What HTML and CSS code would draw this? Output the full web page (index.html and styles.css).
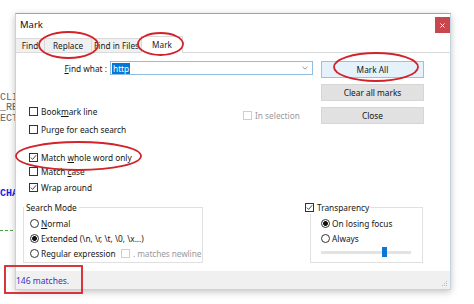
FILE: index.html
```html
<!DOCTYPE html>
<html>
<head>
<meta charset="utf-8">
<title>Mark</title>
<link rel="stylesheet" href="styles.css">
</head>
<body>
<div class="editor">
  <div class="code">CLI</div>
  <div class="code">_RE</div>
  <div class="code">ECT</div>
  <div class="code kw">CHA</div>
  <div class="dash"></div>
</div>

<div class="dialog">
  <div class="titlebar">
    <span class="title">Mark</span>
    <span class="closebtn"><svg width="5" height="5" viewBox="0 0 5 5"><path d="M0.5 0.5L4.5 4.5M4.5 0.5L0.5 4.5" stroke="#fff" stroke-width="1"/></svg></span>
  </div>
  <div class="tabs">
    <span class="tab t-find">Find</span>
    <span class="tab t-replace">Replace</span>
    <span class="tab t-fif">Find in Files</span>
    <span class="tab t-mark active">Mark</span>
  </div>
  <div class="body">
    <div class="top">
      <div class="main">
        <div class="findrow">
          <span class="flabel"><u>F</u>ind what :</span>
          <span class="combo"><span class="sel">http</span><svg class="chev" width="6" height="4" viewBox="0 0 6 4"><path d="M0.5 0.8L3 3.2L5.5 0.8" fill="none" stroke="#8a8a8a" stroke-width="0.9"/></svg></span>
        </div>
        <div class="opts">
          <div class="checks">
            <div class="row r1"><span class="cb"></span><span>Book<u>m</u>ark line</span></div>
            <div class="row r2"><span class="cb"></span><span>Purge for each search</span></div>
            <div class="row r3"><span class="cb"><svg width="7" height="7" viewBox="0 0 7 7"><path d="M0.8 3.6L2.6 5.4L6.2 1.2" fill="none" stroke="#333" stroke-width="0.9"/></svg></span><span>Match <u>w</u>hole word only</span></div>
            <div class="row r4"><span class="cb"></span><span>Match <u>c</u>ase</span></div>
            <div class="row r5"><span class="cb"><svg width="7" height="7" viewBox="0 0 7 7"><path d="M0.8 3.6L2.6 5.4L6.2 1.2" fill="none" stroke="#333" stroke-width="0.9"/></svg></span><span>Wrap around</span></div>
          </div>
          <div class="row insel"><span class="cb dis"></span><span class="distext">In selection</span></div>
        </div>
      </div>
      <div class="buttons">
        <div class="btn primary">Mark All</div>
        <div class="btn">Clear all marks</div>
        <div class="btn">Close</div>
      </div>
    </div>
    <div class="groups">
      <fieldset class="grp search">
        <legend>Search Mode</legend>
        <div class="row g1"><span class="rb"></span><span><u>N</u>ormal</span></div>
        <div class="row g2"><span class="rb on"></span><span>Extended (\n, \r, \t, \0, \x...)</span></div>
        <div class="row g2"><span class="rb"></span><span class="regex">Regular expression</span><span class="cb dis"></span><span class="distext newline">. matches newline</span></div>
      </fieldset>
      <fieldset class="grp transp">
        <legend class="row tlegend"><span class="cb"><svg width="7" height="7" viewBox="0 0 7 7"><path d="M0.8 3.6L2.6 5.4L6.2 1.2" fill="none" stroke="#333" stroke-width="0.9"/></svg></span><span>Transparency</span></legend>
        <div class="row t1"><span class="rb on"></span><span>On losing focus</span></div>
        <div class="row t2"><span class="rb"></span><span>Always</span></div>
        <div class="slider"><span class="thumb"></span></div>
      </fieldset>
    </div>
  </div>
  <div class="status">
    <span>146 matches.</span>
    <svg class="grip" width="6" height="6" viewBox="0 0 6 6"><rect x="4" y="0" width="1" height="1" fill="#b8b8b8"/><rect x="2" y="2" width="1" height="1" fill="#b8b8b8"/><rect x="4" y="2" width="1" height="1" fill="#b8b8b8"/><rect x="0" y="4" width="1" height="1" fill="#b8b8b8"/><rect x="2" y="4" width="1" height="1" fill="#b8b8b8"/><rect x="4" y="4" width="1" height="1" fill="#b8b8b8"/></svg>
  </div>
</div>

<svg class="annot" width="474" height="304" viewBox="0 0 474 304">
  <g fill="none" stroke="#d2232a" stroke-width="1.8">
    <ellipse cx="68.5" cy="45" rx="29.5" ry="13"/>
    <ellipse cx="160.5" cy="44" rx="22.5" ry="11"/>
    <ellipse cx="376" cy="67" rx="42" ry="14"/>
    <ellipse cx="78.5" cy="156" rx="62.5" ry="14"/>
    <rect x="5" y="266" width="77" height="27"/>
  </g>
</svg>
</body>
</html>
```

FILE: styles.css
```css
html, body {
  margin: 0;
  padding: 0;
}
body {
  width: 474px;
  height: 304px;
  position: relative;
  overflow: hidden;
  background: #fff;
  font-family: "Noto Sans", "Open Sans", sans-serif;
  font-size: 8.3px;
  color: #161616;
}
u { text-decoration: underline; text-underline-offset: 1px; }

/* background editor */
.editor {
  padding-top: 92.75px;
  font-family: "Liberation Mono", monospace;
  font-size: 10px;
  line-height: 10.5px;
  color: #666;
}
.kw {
  color: #1c1ce8;
  font-weight: bold;
  margin-top: 64.5px;
}
.dash {
  margin-top: 30.75px;
  width: 15px;
  height: 1px;
  background: repeating-linear-gradient(90deg, #4aa04a 0 3px, transparent 3px 5px);
}

/* dialog window */
.dialog {
  position: absolute;
  left: 15px;
  top: 13px;
  width: 436px;
  height: 277px;
  box-sizing: border-box;
  border: 1px solid #c4d3e2;
  border-top-color: #78abdd;
  background: #fff;
  box-shadow: 0 2px 7px rgba(0, 0, 0, 0.24);
  display: flex;
  flex-direction: column;
}
.titlebar {
  height: 24px;
  flex: none;
  display: flex;
  align-items: flex-start;
}
.title {
  padding-left: 4px;
  font-size: 9.5px;
  line-height: 22px;
  color: #111;
}
.closebtn {
  margin-left: auto;
  margin-top: 3px;
  width: 15px;
  height: 16px;
  background: #c8464d;
  display: flex;
  align-items: center;
  justify-content: center;
}

.tabs {
  height: 15px;
  flex: none;
  box-sizing: border-box;
  border-bottom: 1px solid #dadada;
  display: flex;
  align-items: flex-end;
}
.tab {
  height: 14px;
  box-sizing: border-box;
  border: 1px solid #dadada;
  border-bottom: none;
  margin-right: -1px;
  background: #f0f0f0;
  display: flex;
  align-items: center;
  justify-content: center;
  white-space: nowrap;
  color: #1a1a1a;
  font-size: 8.2px;
}
.t-find { width: 29px; border-left: none; }
.t-replace { width: 48px; }
.t-fif { width: 51px; }
.t-mark { width: 42px; }
.tab.active {
  background: #fff;
  height: 17px;
  margin-bottom: -1px;
  padding-bottom: 2px;
}

.body {
  flex: 1;
  display: flex;
  flex-direction: column;
  box-sizing: border-box;
  padding: 8px 26px 0 0;
}
.top {
  display: flex;
}
.main {
  width: 305px;
  flex: none;
}
.findrow {
  height: 14px;
  display: flex;
  align-items: center;
}
.flabel {
  width: 91px;
  text-align: right;
  white-space: nowrap;
}
.combo {
  margin-left: 3px;
  width: 203px;
  height: 14px;
  box-sizing: border-box;
  border: 1px solid #92bde3;
  display: flex;
  align-items: center;
  padding-left: 1px;
}
.sel {
  background: #0078d7;
  color: #fff;
  line-height: 11px;
  padding: 0 1px;
}
.chev {
  margin-left: auto;
  margin-right: 4px;
}

.opts {
  display: grid;
  grid-template-columns: 214px 1fr;
  padding-left: 13px;
}
.checks {
  display: flex;
  flex-direction: column;
}
.row {
  display: flex;
  align-items: center;
  height: 12px;
  white-space: nowrap;
}
.r1 { margin-top: 30px; }
.r2 { margin-top: 6.5px; }
.r3 { margin-top: 15.5px; }
.r4 { margin-top: 2px; }
.r5 { margin-top: 4px; }
.insel { margin-top: 34.5px; }

.cb {
  width: 9px;
  height: 9px;
  box-sizing: border-box;
  border: 1px solid #333;
  background: #fff;
  margin-right: 3px;
  flex: none;
  display: flex;
  align-items: center;
  justify-content: center;
}
.cb.dis { border-color: #cfcfcf; }
.distext { color: #9b9b9b; }

.rb {
  width: 9px;
  height: 9px;
  box-sizing: border-box;
  border: 1px solid #333;
  border-radius: 50%;
  background: #fff;
  margin-right: 2px;
  flex: none;
}
.rb.on {
  background: radial-gradient(circle, #111 0 2.1px, #fff 2.7px);
}

.buttons {
  width: 103px;
  flex: none;
  display: flex;
  flex-direction: column;
  gap: 6px;
}
.btn {
  height: 17px;
  box-sizing: border-box;
  border: 1px solid #d6d6d6;
  background: #e1e1e1;
  display: flex;
  align-items: center;
  justify-content: center;
  white-space: nowrap;
}
.btn.primary {
  background: #e5f1fb;
  border-color: #93c3ec;
}

.groups {
  display: flex;
  margin-top: 8.5px;
}
.grp {
  margin: 0;
  min-width: 0;
  box-sizing: border-box;
  border: 1px solid #e0e0e0;
}
.grp legend {
  line-height: 11px;
}
.search {
  margin-left: 7px;
  width: 180px;
  padding: 0 0 2px 6px;
}
.search legend {
  margin-left: -6px;
  padding: 0 2px;
}
.g1 { margin-top: 5px; }
.g2 { margin-top: 3px; }
.regex { width: 80px; flex: none; }
.newline {
  letter-spacing: -0.1px;
}

.transp {
  margin-left: auto;
  margin-right: 1px;
  width: 113px;
  padding: 0 0 3px 10px;
}
.tlegend {
  margin-left: -16px;
  padding: 0 1px 0 0;
}
.t1 { margin-top: 3.5px; }
.t2 { margin-top: 3.5px; }
.slider {
  margin-top: 1.5px;
  width: 90px;
  height: 12px;
  display: flex;
  align-items: center;
  background: linear-gradient(#e3e3e3, #e3e3e3) center / 100% 3px no-repeat;
}
.thumb {
  margin-left: 61px;
  width: 5px;
  height: 10px;
  background: #0a78d4;
}

.status {
  height: 18px;
  flex: none;
  background: #f0f0f0;
  display: flex;
  align-items: center;
  color: #3434c4;
  font-size: 8.5px;
}
.grip {
  margin-left: auto;
  margin-right: 2px;
  align-self: flex-end;
  margin-bottom: 2px;
}

.annot {
  position: absolute;
  left: 0;
  top: 0;
  pointer-events: none;
}
```
